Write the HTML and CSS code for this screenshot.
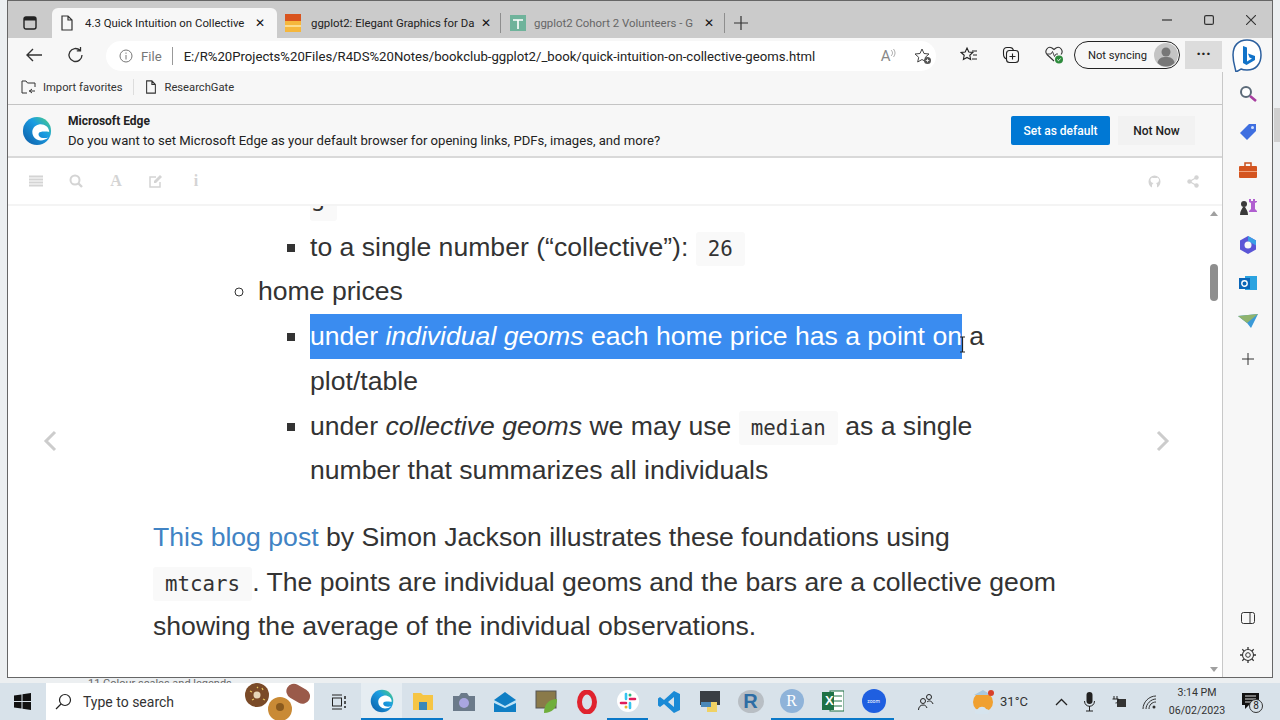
FILE: index.html
```html
<!DOCTYPE html>
<html lang="en">
<head>
    <meta charset="UTF-8">
    <title>4.3 Quick Intuition on Collective Geoms</title>
    <link rel="stylesheet" href="styles.css">
</head>
<body>
    <svg class="defs" width="0" height="0">
        <defs>
            <linearGradient id="edgeBlue" x1="0" y1="1" x2="1" y2="0">
                <stop offset="0" stop-color="#0c59a4"></stop>
                <stop offset="0.6" stop-color="#1b9de2"></stop>
                <stop offset="1" stop-color="#4fd27a"></stop>
            </linearGradient>
            <symbol id="edge" viewBox="0 0 32 32">
                <circle cx="16" cy="16" r="15" fill="url(#edgeBlue)"></circle>
                <path d="M29 17c0-6-6-9-11-8-5 1-7 5-7 8 0 5 4 9 9 9 3 0 6-1 8-3-3 1-8 1-10-2-1-2 0-4 2-4 3-1 8 0 9 0z" fill="#fff"></path>
            </symbol>
            <symbol id="doc" viewBox="0 0 16 16">
                <path d="M3 1h6l4 4v10H3zM9 1v4h4" fill="none" stroke="#333" stroke-width="1.2"></path>
            </symbol>
        </defs>
    </svg>

    <div class="desk-scroll"></div>

    <div class="window">
        <!-- Tabs -->
        <div class="tabstrip">
            <svg class="tab-actions" width="14" height="14" viewBox="0 0 14 14"><rect x="1" y="1" width="12" height="12" rx="2" fill="none" stroke="#222" stroke-width="1.4"></rect><rect x="1" y="1" width="12" height="3.5" fill="#222"></rect></svg>
            <div class="tab tab-active">
                <svg class="favicon" width="16" height="16"><use href="#doc"></use></svg>
                <span class="tab-title">4.3 Quick Intuition on Collective</span>
                <span class="tab-close">✕</span>
            </div>
            <div class="tab tab-second">
                <svg class="favicon" width="16" height="18" viewBox="0 0 16 18"><rect width="16" height="18" fill="#f6b73c"></rect><rect width="16" height="7" fill="#d9541e"></rect><rect y="11" width="16" height="2" fill="#fbdc8e"></rect></svg>
                <span class="tab-title">ggplot2: Elegant Graphics for Da</span>
                <span class="tab-close">✕</span>
            </div>
            <div class="tab-sep"></div>
            <div class="tab tab-third">
                <svg class="favicon" width="16" height="16" viewBox="0 0 16 16"><rect width="16" height="16" fill="#6fb39b"></rect><path d="M3 5h10M8 5v9" stroke="#fff" stroke-width="1.6"></path></svg>
                <span class="tab-title tab-muted">ggplot2 Cohort 2 Volunteers - G</span>
                <span class="tab-close">✕</span>
            </div>
            <div class="tab-sep"></div>
            <svg class="new-tab" width="14" height="14" viewBox="0 0 14 14"><path d="M7 0v14M0 7h14" stroke="#333" stroke-width="1.2"></path></svg>
            <div class="win-controls">
                <svg width="10" height="10" viewBox="0 0 10 10"><path d="M0 5h10" stroke="#333" stroke-width="1.2"></path></svg>
                <svg width="10" height="10" viewBox="0 0 10 10"><rect x="0.6" y="0.6" width="8.8" height="8.8" rx="1.5" fill="none" stroke="#333" stroke-width="1.2"></rect></svg>
                <svg width="10" height="10" viewBox="0 0 10 10"><path d="M0 0l10 10M10 0L0 10" stroke="#333" stroke-width="1.1"></path></svg>
            </div>
        </div>

        <!-- Address bar row -->
        <div class="toolbar">
            <svg class="tool-back" width="18" height="16" viewBox="0 0 18 16"><path d="M17 8H2M8 2L2 8l6 6" fill="none" stroke="#333" stroke-width="1.4"></path></svg>
            <svg class="tool-reload" width="18" height="18" viewBox="0 0 18 18"><path d="M15 9a6.5 6.5 0 1 1-2-4.7M13.5 1v3.8H9.8" fill="none" stroke="#333" stroke-width="1.3"></path></svg>
            <div class="address">
                <svg width="14" height="14" viewBox="0 0 14 14"><circle cx="7" cy="7" r="6" fill="none" stroke="#777"></circle><path d="M7 6v4.5M7 3.5v1.3" stroke="#777"></path></svg>
                <span class="address-file">File</span>
                <span class="address-sep"></span>
                <span class="address-url">E:/R%20Projects%20Files/R4DS%20Notes/bookclub-ggplot2/_book/quick-intuition-on-collective-geoms.html</span>
                <span class="read-aloud">A<svg width="6" height="8" viewBox="0 0 6 8"><path d="M1 1c2 2 2 4 0 6M3.500 0c2 3 2 5 0 8" fill="none" stroke="#888" stroke-width="0.7"></path></svg></span>
                <svg width="18" height="18" viewBox="0 0 18 18"><path d="M8 2l2 4.500 5 .5-3.700 3.300 1 4.700L8 12.500 3.700 15l1-4.700L1 7l5-.5z" fill="none" stroke="#444"></path><circle cx="13.500" cy="13.500" r="3.500" fill="#555"></circle><path d="M13.500 11.800v3.400M11.800 13.500h3.400" stroke="#fff" stroke-width="0.8"></path></svg>
            </div>
            <svg class="tool-icon" width="18" height="18" viewBox="0 0 18 18"><path d="M7 2l1.800 4 4 .5-3 2.800.8 4.200L7 11.400 3.400 13.500l.8-4.200-3-2.800 4-.5zM12 5h5M13 9h4M12 13h5" fill="none" stroke="#222" stroke-width="1.1"></path></svg>
            <svg class="tool-icon" width="18" height="18" viewBox="0 0 18 18"><rect x="4.500" y="4.500" width="12" height="12" rx="3" fill="none" stroke="#222" stroke-width="1.1"></rect><path d="M4.500 13C2 12 1.500 10 1.500 8V5c0-2 1.500-3.500 3.500-3.500h3c1.500 0 3 .8 3.500 3M10.500 7.500v6M7.500 10.500h6" fill="none" stroke="#222" stroke-width="1.1"></path></svg>
            <svg class="tool-icon" width="20" height="18" viewBox="0 0 20 18"><path d="M10 15L3 8.500C0 5 4-0.500 8 2l2 1.500L12 2c4-2.500 8 3 5 6.500" fill="none" stroke="#333" stroke-width="1.1"></path><path d="M3 8h4l1.500-2.500 2 5 1.500-2.500h2" fill="none" stroke="#333" stroke-width="0.9"></path><circle cx="15" cy="13.500" r="4" fill="#2e8b3d"></circle><path d="M13.200 13.500l1.300 1.300 2.200-2.400" fill="none" stroke="#fff" stroke-width="0.9"></path></svg>
            <div class="sync-pill">
                <span>Not syncing</span>
                <svg width="24" height="24" viewBox="0 0 24 24"><circle cx="12" cy="12" r="12" fill="#c4c4c4"></circle><circle cx="12" cy="9" r="4.500" fill="#777"></circle><path d="M3.500 20c1-5 4-6 8.500-6s7.500 1 8.500 6a12 12 0 0 1-17 0z" fill="#777"></path></svg>
            </div>
            <div class="more-btn">···</div>
            <svg class="bing" width="32" height="38" viewBox="0 0 32 38"><path d="M16 2C7 2 2 8 2 17c0 7 2 12 3 17l5-3c2 1 4 1 6 1 9 0 14-6 14-15S25 2 16 2z" fill="#fff" stroke="#2b5f9e" stroke-width="1.5"></path><path d="M12 8l4 1.500v14l5-3-2.500-1-1.500-4 7 2.500v4l-8.500 5-3.500-2z" fill="#1273c9"></path></svg>
        </div>

        <div class="below">
            <div class="main">
                <!-- Favorites -->
                <div class="favbar">
                    <svg width="15" height="14" viewBox="0 0 15 14"><path d="M6 13H1V1h4l1.500 2H14v4M8 11h6M11 9l-2.500 2 2.500 2" fill="none" stroke="#333"></path></svg>
                    <span>Import favorites</span>
                    <span class="fav-sep"></span>
                    <svg width="14" height="16"><use href="#doc"></use></svg>
                    <span>ResearchGate</span>
                </div>

                <!-- Default browser prompt -->
                <div class="infobar">
                    <svg class="edge-logo" width="30" height="30"><use href="#edge"></use></svg>
                    <div class="info-text">
                        <strong>Microsoft Edge</strong>
                        <p>Do you want to set Microsoft Edge as your default browser for opening links, PDFs, images, and more?</p>
                    </div>
                    <button class="btn-primary">Set as default</button>
                    <button class="btn-plain">Not Now</button>
                </div>

                <!-- Book toolbar -->
                <div class="book-bar">
                    <svg width="14" height="12" viewBox="0 0 14 12"><path d="M0 1.500h14M0 4.500h14M0 7.500h14M0 10.500h14" stroke="#d4d4d4" stroke-width="1.800"></path></svg>
                    <svg width="14" height="14" viewBox="0 0 14 14"><circle cx="6" cy="6" r="4.500" fill="none" stroke="#d4d4d4" stroke-width="2"></circle><path d="M9.500 9.500L13 13" stroke="#d4d4d4" stroke-width="2.400"></path></svg>
                    <span class="book-glyph">A</span>
                    <svg width="14" height="14" viewBox="0 0 14 14"><path d="M11 8v5H1V3h6" fill="none" stroke="#d4d4d4" stroke-width="1.500"></path><path d="M5 7l6-6 2 2-6 6H5z" fill="#d4d4d4"></path></svg>
                    <span class="book-glyph">i</span>
                    <span class="book-spacer"></span>
                    <svg width="13" height="13" viewBox="0 0 13 13"><path d="M4 12.500C1.500 11.500 0.500 9 0.500 6.500a6 6 0 0 1 12 0c0 2.500-1 5-3.500 6V10c0-1-.5-1.500-1-2 1.500 0 3-1 3-3 0-1-.5-1.500-1-2 0-.5-.5-.5-1.500 0H5c-1-.5-1.500-.5-1.500 0-.5.500-1 1-1 2 0 2 1.500 3 3 3-.5.500-1 1-1.500 2z" fill="#d4d4d4"></path></svg>
                    <svg class="book-share" width="12" height="13" viewBox="0 0 12 13"><path d="M9.500 2.500L2.500 6.500l7 4" fill="none" stroke="#d4d4d4" stroke-width="1.200"></path><circle cx="9.500" cy="2.500" r="2.200" fill="#d4d4d4"></circle><circle cx="2.500" cy="6.500" r="2.200" fill="#d4d4d4"></circle><circle cx="9.500" cy="10.500" r="2.200" fill="#d4d4d4"></circle></svg>
                </div>

                <!-- Page -->
                <div class="page-row">
                    <div class="page">
                        <div class="book-body">
                            <ul class="list-circle">
                                <li class="no-marker">
                                    <ul class="list-square">
                                        <li class="no-marker"><code class="code-tail">3</code></li>
                                        <li>to a single number (“collective”): <code>26</code></li>
                                    </ul>
                                </li>
                                <li>home prices
                                    <ul class="list-square">
                                        <li><span class="selected">under <em>individual geoms</em> each home price has a point on</span> a plot/table</li>
                                        <li>under <em>collective geoms</em> we may use <code>median</code> as a single number that summarizes all individuals</li>
                                    </ul>
                                </li>
                            </ul>
                            <p><a href="#">This blog post</a> by Simon Jackson illustrates these foundations using <code>mtcars</code>. The points are individual geoms and the bars are a collective geom showing the average of the individual observations.</p>
                        </div>
                        <svg class="ibeam" width="7" height="17" viewBox="0 0 7 17"><path d="M1 1h5M1 16h5M3.500 1v15" fill="none" stroke="#222" stroke-width="1.200"></path></svg>
                        <svg class="nav-arrow nav-prev" width="14" height="22" viewBox="0 0 14 22"><path d="M12 2L3 11l9 9" fill="none" stroke="#ccc" stroke-width="3"></path></svg>
                        <svg class="nav-arrow nav-next" width="14" height="22" viewBox="0 0 14 22"><path d="M2 2l9 9-9 9" fill="none" stroke="#ccc" stroke-width="3"></path></svg>
                    </div>
                    <div class="scrollbar">
                        <span class="arrow-up"></span>
                        <span class="thumb"></span>
                        <span class="arrow-down"></span>
                    </div>
                </div>
            </div>

            <!-- Edge sidebar -->
            <div class="sidebar">
                <svg width="18" height="18" viewBox="0 0 18 18"><circle cx="7" cy="7" r="5" fill="#fff" stroke="#5b6a78" stroke-width="2"></circle><path d="M11 11l6 5" stroke="#a83ea0" stroke-width="2.600"></path></svg>
                <svg width="18" height="18" viewBox="0 0 18 18"><path d="M1 10L10 1h7v7l-9 9z" fill="#3f6fe0"></path><circle cx="13.500" cy="4.500" r="1.500" fill="#cfe0ff"></circle></svg>
                <svg width="18" height="16" viewBox="0 0 18 16"><path d="M6 4V1h6v3" fill="none" stroke="#c8501e" stroke-width="1.500"></path><rect y="4" width="18" height="12" rx="1" fill="#d4541f"></rect><rect y="9" width="18" height="1" fill="#f2a37d"></rect></svg>
                <svg width="20" height="18" viewBox="0 0 20 18"><circle cx="6" cy="6" r="3" fill="#3a3a3a"></circle><path d="M2 17c0-4 2-6 3-8h2c1 2 3 4 3 8z" fill="#3a3a3a"></path><path d="M11 1h2v2h2V1h2v2h2v1l-2 1v6l2 2v1h-8v-1l2-2V5l-2-1z" fill="#b05fd0"></path></svg>
                <svg width="18" height="18" viewBox="0 0 18 18"><path d="M9 0l8 4.500v9L9 18l-8-4.500v-9z" fill="#5a55d6"></path><path d="M9 0l8 4.500v5L9 5z" fill="#3aa0e6"></path><circle cx="9" cy="9" r="3.500" fill="#f7f7f7"></circle></svg>
                <svg width="18" height="18" viewBox="0 0 18 18"><rect x="6" y="2" width="12" height="14" fill="#2ba3e0"></rect><rect y="4" width="11" height="11" fill="#0a66b8"></rect><circle cx="5.500" cy="9.500" r="2.700" fill="none" stroke="#fff" stroke-width="1.400"></circle></svg>
                <svg width="20" height="14" viewBox="0 0 20 14"><path d="M0 2l20-2-7 14-4-5z" fill="#3b9ad8"></path><path d="M0 2l9 7 11-9z" fill="#8fb36d"></path></svg>
                <svg width="12" height="12" viewBox="0 0 12 12"><path d="M6 0v12M0 6h12" stroke="#333"></path></svg>
                <span class="side-spacer"></span>
                <svg width="14" height="12" viewBox="0 0 14 12"><rect x="0.500" y="0.500" width="13" height="11" rx="2" fill="none" stroke="#333"></rect><path d="M9 0.500v11" stroke="#333"></path></svg>
                <svg class="side-gear" width="16" height="16" viewBox="0 0 16 16"><circle cx="8" cy="8" r="2.300" fill="none" stroke="#333"></circle><circle cx="8" cy="8" r="5.500" fill="none" stroke="#333" stroke-width="1.100"></circle><path d="M8 0v2.500M8 13.500V16M0 8h2.500M13.500 8H16M2.300 2.300l1.800 1.800M11.900 11.900l1.800 1.800M13.700 2.300l-1.800 1.800M4.100 11.900l-1.800 1.800" stroke="#333" stroke-width="1.300"></path></svg>
            </div>
        </div>
    </div>

    <!-- Window behind -->
    <div class="behind"><span>11 Colour scales and legends</span></div>

    <!-- Taskbar -->
    <div class="taskbar">
        <svg class="start" width="17" height="17" viewBox="0 0 17 17"><path d="M0 2.500L7.500 1.400V8H0zM8.500 1.300L17 0v8H8.500zM0 9h7.500v6.600L0 14.500zM8.500 9H17v8l-8.500-1.300z" fill="#111"></path></svg>
        <div class="search">
            <svg width="17" height="17" viewBox="0 0 17 17"><circle cx="10" cy="7" r="5.500" fill="none" stroke="#222" stroke-width="1.200"></circle><path d="M6 11l-5 5" stroke="#222" stroke-width="1.300"></path></svg>
            <span>Type to search</span>
            <svg class="donuts" width="68" height="37" viewBox="0 0 68 37">
                <circle cx="13" cy="12" r="12" fill="#7a4a28"></circle>
                <circle cx="13" cy="12" r="3.500" fill="#e6d6b8"></circle>
                <path d="M6 8l2 1M18 5l1 2M8 17l2-1M19 16l2 1M13 4l1 1" stroke="#e8c860" stroke-width="1.200"></path>
                <circle cx="36" cy="26" r="12" fill="#c98a35"></circle>
                <circle cx="36" cy="24" r="4" fill="#8a5a1e"></circle>
                <rect x="42" y="3" width="25" height="15" rx="7.500" transform="rotate(30 54 10)" fill="#9a5a4a"></rect>
            </svg>
        </div>
        <div class="app task-view"><svg width="16" height="16" viewBox="0 0 16 16"><path d="M1 1h10M1 15h10" stroke="#222"></path><rect x="1.500" y="4" width="9" height="8" fill="none" stroke="#222"></rect><path d="M14 2v3M14 7v3M14 12v2" stroke="#222" stroke-width="1.500"></path></svg></div>
        <div class="app app-edge app-on"><svg width="24" height="24"><use href="#edge"></use></svg></div>
        <div class="app app-on"><svg width="22" height="20" viewBox="0 0 22 20"><path d="M1 2h8l2 2h10v15H1z" fill="#f6c544"></path><rect x="7" y="11" width="8" height="8" fill="#3a88b8"></rect></svg></div>
        <div class="app"><svg width="22" height="18" viewBox="0 0 22 18"><path d="M0 3h6l2-3h6l2 3h6v15H0z" fill="#6b7a8a"></path><circle cx="11" cy="10" r="5" fill="#a9a6e0"></circle></svg></div>
        <div class="app"><svg width="22" height="20" viewBox="0 0 22 20"><path d="M0 8l11-8 11 8v12H0z" fill="#0f7ec4"></path><path d="M0 8l11 6 11-6v3l-11 5-11-5z" fill="#bfe4f7"></path></svg></div>
        <div class="app"><svg width="22" height="24" viewBox="0 0 22 24"><rect x="1" y="1" width="20" height="17" fill="#8a7a4a" stroke="#555"></rect><path d="M9 23c0-9 5-14 13-14 0 9-5 14-13 14z" fill="#6fae3c"></path></svg></div>
        <div class="app"><svg width="20" height="24" viewBox="0 0 20 24"><ellipse cx="10" cy="12" rx="7.500" ry="10" fill="none" stroke="#e0232e" stroke-width="5"></ellipse></svg></div>
        <div class="app app-on"><svg width="22" height="22" viewBox="0 0 22 22"><circle cx="11" cy="11" r="11" fill="#fff"></circle><path d="M9 4v5M13 13v5" stroke="#36c5f0" stroke-width="2.600" stroke-linecap="round"></path><path d="M4 13h5M13 9h5" stroke="#e01e5a" stroke-width="2.600" stroke-linecap="round"></path><circle cx="13" cy="5" r="1.500" fill="#2eb67d"></circle><circle cx="9" cy="17" r="1.500" fill="#ecb22e"></circle></svg></div>
        <div class="app"><svg width="24" height="24" viewBox="0 0 24 24"><path d="M17 1l6 3v16l-6 3L7 14l-4 3-2-1.500v-7L3 7l4 3zM17 7l-6 5 6 5z" fill="#1a8ad6" fill-rule="evenodd"></path></svg></div>
        <div class="app"><svg width="22" height="24" viewBox="0 0 22 24"><rect x="1" y="1" width="20" height="14" fill="#3a3f44"></rect><path d="M8 12h10v10H8z" fill="#f0d264"></path><path d="M2 12h10v5H2z" fill="#4a88b8"></path></svg></div>
        <div class="app"><span class="r-gray">R</span></div>
        <div class="app app-on"><span class="r-badge">R</span></div>
        <div class="app app-on"><svg width="22" height="24" viewBox="0 0 22 24"><rect x="8" y="2" width="14" height="20" fill="#fff" stroke="#1e7145"></rect><path d="M12 7h8M12 12h8M12 17h8" stroke="#1e7145"></path><rect y="3" width="12" height="18" fill="#1e7145"></rect><text x="3" y="16" class="xl-x">X</text></svg></div>
        <div class="app app-on"><span class="zoom-badge">zoom</span></div>
        <span class="task-spacer"></span>
        <svg class="people" width="16" height="18" viewBox="0 0 16 18"><circle cx="5" cy="8" r="2.500" fill="none" stroke="#222"></circle><path d="M0.500 17c0-3 2-5 4.500-5s3 1 4 3" fill="none" stroke="#222"></path><circle cx="11" cy="4" r="2.500" fill="none" stroke="#222"></circle><path d="M9 9c2-2 5-1 6 2" fill="none" stroke="#222"></path></svg>
        <svg class="weather" width="24" height="26" viewBox="0 0 24 26"><circle cx="12" cy="13" r="10" fill="#f0a030"></circle><path d="M3 6l9-5 8 5z" fill="#a8c8de"></path><path d="M6 25c-3 0-3-5 1-5 1-3 7-3 8 0 4 0 4 5 1 5z" fill="#d6e4ee"></path><circle cx="20" cy="4" r="3" fill="#d8402a"></circle></svg>
        <span class="temp">31°C</span>
        <svg class="tray-up" width="13" height="8" viewBox="0 0 13 8"><path d="M1 7l5.500-5.500L12 7" fill="none" stroke="#222" stroke-width="1.300"></path></svg>
        <svg class="tray-mic" width="11" height="20" viewBox="0 0 11 20"><rect x="2.500" y="0" width="6" height="12" rx="3" fill="#222"></rect><path d="M0.500 9c0 7 10 7 10 0M5.500 14v5M2 19h7" fill="none" stroke="#222"></path></svg>
        <svg class="tray-power" width="14" height="12" viewBox="0 0 14 12"><rect x="5" y="3" width="9" height="8" fill="#333"></rect><path d="M2 0v3M5 0v3M0.500 3h6c0 3-1.500 4-3 4" fill="none" stroke="#222"></path></svg>
        <svg class="tray-wifi" width="14" height="14" viewBox="0 0 14 14"><path d="M1 14C1 7 7 1 14 1M4 14c0-5 5-10 10-10M7 14c0-4 3-7 7-7" fill="none" stroke="#333"></path><circle cx="12" cy="12" r="1.500" fill="#333"></circle></svg>
        <div class="clock"><span>3:14 PM</span><span>06/02/2023</span></div>
        <div class="notify">
            <svg width="17" height="17" viewBox="0 0 17 17"><path d="M0 0h17v12H7l-4 4v-4H0z" fill="#111"></path><path d="M3 3h11M3 6h11M3 9h7" stroke="#ddd"></path></svg>
            <span class="notify-badge">8</span>
        </div>
    </div>
</body>
</html>
```
FILE: styles.css
```css
* {
    margin: 0;
    padding: 0;
    box-sizing: border-box;
}
html, body {
    height: 720px;
    overflow: hidden;
}
body {
    background-color: #eceff1;
    font-family: Roboto, 'Liberation Sans', sans-serif;
    color: #222;
    display: flex;
    flex-direction: column;
}
svg {
    flex: none;
    display: block;
}
.defs {
    position: absolute;
}
.desk-scroll {
    position: absolute;
    left: 1274px;
    top: 108px;
    width: 6px;
    height: 34px;
    background-color: #cfcfcf;
}
/* Window */
.window {
    width: 1266px;
    height: 678px;
    margin-left: 7px;
    border: 1px solid #666;
    display: flex;
    flex-direction: column;
    background-color: #f7f7f7;
    flex: none;
}
/* Tabs */
.tabstrip {
    height: 37px;
    background-color: #cbcbcb;
    display: flex;
    align-items: flex-end;
    flex: none;
}
.tab-actions {
    margin: 0 0 8px 15px;
}
.tab {
    height: 30px;
    display: flex;
    align-items: center;
    font-size: 11.4px;
    flex: none;
}
.tab-active {
    width: 225px;
    padding-left: 7px;
    background-color: #f7f7f7;
    border-radius: 6px 6px 0 0;
    margin-left: 15px;
}
.tab-second {
    width: 223px;
    padding-left: 8px;
}
.tab-third {
    width: 223px;
    padding-left: 9px;
}
.tab-title {
    width: 166px;
    margin-left: 10px;
    white-space: nowrap;
    overflow: hidden;
}
.tab-third .tab-title {
    margin-left: 8px;
}
.tab-muted {
    color: #666;
}
.tab-close {
    font-size: 12px;
    margin-left: 4px;
    color: #111;
}
.tab-sep {
    width: 1px;
    height: 20px;
    background-color: #8e8e8e;
    margin-bottom: 5px;
    flex: none;
}
.new-tab {
    margin: 0 0 8px 9px;
}
.win-controls {
    margin-left: auto;
    height: 30px;
    display: flex;
    gap: 32px;
    padding-top: 5px;
    margin-right: 16px;
    margin-bottom: 6px;
    align-items: center;
}
/* Toolbar */
.toolbar {
    height: 34px;
    background-color: #f7f7f7;
    display: flex;
    align-items: center;
    flex: none;
}
.tool-back {
    margin-left: 17px;
}
.tool-reload {
    margin-left: 24px;
}
.address {
    width: 830px;
    height: 30px;
    background-color: #fff;
    border-radius: 15px;
    margin: 2px 0 0 21px;
    padding-left: 13px;
    display: flex;
    align-items: center;
    font-size: 13.15px;
}
.address-file {
    color: #777;
    margin-left: 8px;
}
.address-sep {
    width: 1px;
    height: 18px;
    background-color: #999;
    margin: 0 11px 0 10px;
}
.address-url {
    color: #222;
    width: 697px;
    white-space: nowrap;
    overflow: hidden;
}
.read-aloud {
    display: flex;
    color: #888;
    font-size: 15px;
    margin-right: 18px;
}
.address .read-aloud svg {
    margin-top: 2px;
}
.tool-icon {
    margin-left: 24px;
}
.sync-pill {
    width: 106px;
    height: 28px;
    border: 1px solid #222;
    border-radius: 14px;
    background-color: #f7f7f7;
    margin-left: 10px;
    padding: 0 1px 0 13px;
    display: flex;
    align-items: center;
    justify-content: space-between;
    font-size: 11.2px;
}
.more-btn {
    width: 37px;
    height: 28px;
    margin-left: 5px;
    background-color: #dcdcdc;
    font-size: 16px;
    font-weight: 700;
    text-align: center;
    line-height: 26px;
}
.bing {
    margin-left: 9px;
    margin-top: 4px;
}
/* Below the toolbar */
.below {
    flex: 1;
    display: flex;
    min-height: 0;
}
.main {
    width: 1214px;
    display: flex;
    flex-direction: column;
}
.favbar {
    height: 33px;
    display: flex;
    align-items: center;
    font-size: 11.2px;
    padding: 0 0 2px 13px;
    border-bottom: 1px solid #c4c4c4;
    flex: none;
    color: #333;
}
.favbar span {
    margin-left: 7px;
}
.favbar .fav-sep {
    width: 1px;
    height: 16px;
    background-color: #ddd;
    margin: 0 10px;
}
/* Info bar */
.infobar {
    height: 53px;
    display: flex;
    align-items: center;
    padding-left: 14px;
    border-bottom: 2px solid #d9d9d9;
    font-size: 13.1px;
    flex: none;
}
.info-text {
    margin-left: 16px;
    width: 943px;
    padding-top: 3px;
}
.info-text strong {
    display: block;
    font-size: 12px;
    line-height: 17px;
}
.info-text p {
    line-height: 21px;
}
.btn-primary, .btn-plain {
    font-family: Roboto, sans-serif;
    font-size: 12px;
    font-weight: 500;
    border: none;
    height: 29px;
}
.btn-primary {
    width: 99px;
    background-color: #0078d4;
    color: #fff;
    border-radius: 2px;
}
.btn-plain {
    width: 77px;
    margin-left: 8px;
    background-color: #f2f2f2;
    color: #222;
}
/* Book toolbar */
.book-bar {
    height: 48px;
    background-color: #fff;
    border-bottom: 2px solid #f4f4f4;
    display: flex;
    align-items: center;
    gap: 26px;
    padding-left: 21px;
    flex: none;
    color: #d4d4d4;
}
.book-glyph {
    width: 14px;
    text-align: center;
    font-family: 'Liberation Serif', serif;
    font-size: 16px;
    font-weight: 700;
}
.book-spacer {
    flex: 1;
}
.book-share {
    margin-right: 23px;
}
/* Page */
.page-row {
    flex: 1;
    display: flex;
    min-height: 0;
    background-color: #fff;
}
.page {
    flex: 1;
    position: relative;
    overflow: hidden;
}
.book-body {
    width: 906px;
    margin: -26px 0 0 145px;
    font-family: 'Liberation Sans', sans-serif;
    font-size: 26.6px;
    line-height: 44.7px;
    color: #333;
}
.book-body p {
    margin-top: 22px;
}
.book-body a {
    color: #4183c4;
    text-decoration: none;
}
.book-body code {
    font-family: 'DejaVu Sans Mono', monospace;
    font-size: 20.8px;
    line-height: 1;
    background-color: #f9f9f9;
    padding: 5px 12px;
    border-radius: 3px;
    white-space: nowrap;
}
.book-body .code-tail {
    padding: 5px 12px 5px 2px;
}
.list-circle {
    list-style: circle;
    padding-left: 105px;
}
.list-square {
    list-style: square;
    padding-left: 52px;
}
.no-marker {
    list-style: none;
}
.selected {
    display: inline-block;
    background-color: #3a8cf0;
    color: #fff;
}
.ibeam {
    position: absolute;
    left: 951px;
    top: 130px;
}
.nav-arrow {
    position: absolute;
    top: 224px;
}
.nav-prev {
    left: 35px;
}
.nav-next {
    left: 1148px;
}
.scrollbar {
    width: 17px;
    flex: none;
    position: relative;
}
.arrow-up, .arrow-down {
    position: absolute;
    left: 5px;
    width: 0;
    height: 0;
    border-left: 4px solid transparent;
    border-right: 4px solid transparent;
}
.arrow-up {
    top: 5px;
    border-bottom: 5px solid #a0a0a0;
}
.arrow-down {
    bottom: 5px;
    border-top: 5px solid #a0a0a0;
}
.thumb {
    position: absolute;
    top: 58px;
    left: 5px;
    width: 8px;
    height: 37px;
    border-radius: 4px;
    background-color: #8e8e8e;
}
/* Sidebar */
.sidebar {
    width: 50px;
    border-left: 1px solid #c8c8c8;
    display: flex;
    flex-direction: column;
    align-items: center;
    gap: 19.8px;
    padding-top: 13px;
    background-color: #f7f7f7;
}
.sidebar > svg {
    height: 18px;
}
.side-spacer {
    flex: 1;
}
.sidebar > .side-gear {
    margin-top: -1px;
    margin-bottom: 13px;
}
/* Behind */
.behind {
    height: 5px;
    overflow: hidden;
    font-size: 11px;
    color: #666;
    padding-left: 88px;
    line-height: 12px;
    flex: none;
}
/* Taskbar */
.taskbar {
    height: 37px;
    background-color: #d8e2ea;
    display: flex;
    align-items: center;
    flex: none;
}
.start {
    margin-left: 14px;
}
.search {
    width: 268px;
    height: 37px;
    background-color: #fff;
    margin-left: 15px;
    padding-left: 9px;
    display: flex;
    align-items: center;
    font-size: 14px;
    overflow: hidden;
    color: #333;
}
.search span {
    margin-left: 11px;
    flex: 1;
}
.donuts {
    margin-right: 2px;
}
.app {
    width: 41px;
    height: 37px;
    display: flex;
    align-items: center;
    justify-content: center;
    flex: none;
}
.task-view {
    margin-left: 3px;
    width: 44px;
}
.app-edge {
    background-color: #e6edf2;
}
.app-on {
    border-bottom: 2px solid #0a78c8;
}
.r-gray {
    font-family: 'Liberation Sans', sans-serif;
    font-weight: 700;
    font-size: 20px;
    color: #2e6da4;
    background-color: #b8bec4;
    width: 26px;
    text-align: center;
    border-radius: 50%;
}
.r-badge {
    width: 24px;
    height: 24px;
    border-radius: 50%;
    background-color: #8fb3d9;
    color: #fff;
    font-family: 'Liberation Serif', serif;
    font-size: 16px;
    line-height: 24px;
    text-align: center;
}
.xl-x {
    font-family: 'Liberation Sans', sans-serif;
    font-size: 13px;
    font-weight: 700;
    fill: #fff;
}
.zoom-badge {
    width: 24px;
    height: 24px;
    border-radius: 50%;
    background-color: #1f5fe0;
    color: #fff;
    font-size: 5px;
    line-height: 24px;
    text-align: center;
}
.task-spacer {
    flex: 1;
}
.people {
    margin-right: 37px;
}
.weather {
    margin-right: 5px;
}
.temp {
    font-size: 13px;
    margin-right: 27px;
    color: #333;
}
.tray-mic {
    margin-left: 16px;
}
.tray-power {
    margin-left: 17px;
}
.tray-wifi {
    margin-left: 16px;
}
.clock {
    width: 66px;
    margin-left: 8px;
    display: flex;
    flex-direction: column;
    align-items: center;
    font-size: 10.6px;
    line-height: 18px;
    color: #333;
}
.notify {
    position: relative;
    margin: 0 21px 0 12px;
}
.notify-badge {
    position: absolute;
    left: 7px;
    top: 6px;
    width: 14px;
    height: 14px;
    border-radius: 50%;
    background-color: #d8e2ea;
    border: 1px solid #333;
    font-size: 10px;
    line-height: 12px;
    text-align: center;
}
```
